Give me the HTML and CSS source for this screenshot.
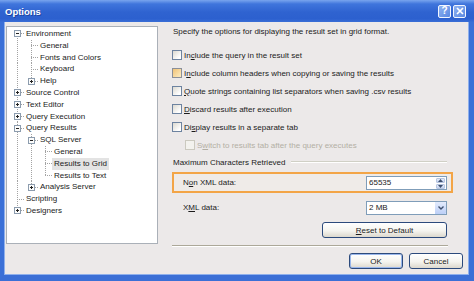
FILE: index.html
```html
<!DOCTYPE html>
<html lang="en">
<head>
    <meta charset="UTF-8">
    <title>Options</title>
    <link rel="stylesheet" href="styles.css">
</head>
<body>

<div class="window">
    <!-- Title bar -->
    <div class="titlebar">
        <span class="title">Options</span>
        <div class="caption-buttons">
            <span class="cap-btn">?</span>
            <span class="cap-btn">
                <svg width="8" height="8" viewBox="0 0 8 8"><path d="M1 1L7 7M7 1L1 7" stroke="#fff" stroke-width="1.7"/></svg>
            </span>
        </div>
    </div>

    <div class="client">
        <!-- Left: options tree -->
        <div class="tree">
            <div class="node"><span class="g f"><i class="box minus"></i></span><span class="label">Environment</span></div>
            <div class="node"><span class="g v"></span><span class="g t"></span><span class="label">General</span></div>
            <div class="node"><span class="g v"></span><span class="g t"></span><span class="label">Fonts and Colors</span></div>
            <div class="node"><span class="g v"></span><span class="g t"></span><span class="label">Keyboard</span></div>
            <div class="node"><span class="g v"></span><span class="g l"><i class="box plus"></i></span><span class="label">Help</span></div>
            <div class="node"><span class="g t"><i class="box plus"></i></span><span class="label">Source Control</span></div>
            <div class="node"><span class="g t"><i class="box plus"></i></span><span class="label">Text Editor</span></div>
            <div class="node"><span class="g t"><i class="box plus"></i></span><span class="label">Query Execution</span></div>
            <div class="node"><span class="g t"><i class="box minus"></i></span><span class="label">Query Results</span></div>
            <div class="node"><span class="g v"></span><span class="g t"><i class="box minus"></i></span><span class="label">SQL Server</span></div>
            <div class="node"><span class="g v"></span><span class="g v"></span><span class="g t"></span><span class="label">General</span></div>
            <div class="node"><span class="g v"></span><span class="g v"></span><span class="g t"></span><span class="label selected">Results to Grid</span></div>
            <div class="node"><span class="g v"></span><span class="g v"></span><span class="g l"></span><span class="label">Results to Text</span></div>
            <div class="node"><span class="g v"></span><span class="g l"><i class="box plus"></i></span><span class="label">Analysis Server</span></div>
            <div class="node"><span class="g t"></span><span class="label">Scripting</span></div>
            <div class="node"><span class="g l"><i class="box plus"></i></span><span class="label">Designers</span></div>
        </div>

        <!-- Right: options page -->
        <div class="page">
            <p class="intro">Specify the options for displaying the result set in grid format.</p>

            <div class="check first"><span class="cb"></span>In<u>c</u>lude the query in the result set</div>
            <div class="check"><span class="cb hot"></span>I<u>n</u>clude column headers when copying or saving the results</div>
            <div class="check"><span class="cb"></span><u>Q</u>uote strings containing list separators when saving .csv results</div>
            <div class="check"><span class="cb"></span><u>D</u>iscard results after execution</div>
            <div class="check"><span class="cb"></span>Di<u>s</u>play results in a separate tab</div>
            <div class="check indent disabled"><span class="cb"></span>S<u>w</u>itch to results tab after the query executes</div>

            <div class="group-title"><span>Maximum Characters Retrieved</span><span class="rule"></span></div>

            <div class="field hl">
                <span class="field-label">N<u>o</u>n XML data:</span>
                <span class="spin">
                    <span class="val">65535</span>
                    <span class="spin-btns">
                        <span><svg width="5" height="3" viewBox="0 0 5 3"><path d="M0 3L2.5 0L5 3Z" fill="#3d4f6e"/></svg></span>
                        <span><svg width="5" height="3" viewBox="0 0 5 3"><path d="M0 0L2.5 3L5 0Z" fill="#3d4f6e"/></svg></span>
                    </span>
                </span>
            </div>

            <div class="field">
                <span class="field-label">X<u>M</u>L data:</span>
                <span class="combo">
                    <span class="val">2 MB</span>
                    <span class="drop"><svg width="6" height="4" viewBox="0 0 6 4"><path d="M0.5 0.5L3 3L5.5 0.5" fill="none" stroke="#3d4f6e" stroke-width="1.4"/></svg></span>
                </span>
            </div>

            <div class="reset-row">
                <button class="btn reset"><u>R</u>eset to Default</button>
            </div>

            <div class="separator"></div>

            <div class="footer">
                <button class="btn default">OK</button>
                <button class="btn">Cancel</button>
            </div>
        </div>
    </div>
</div>

</body>
</html>
```

FILE: styles.css
```css
/* Global */
body {
    margin: 0;
    font-family: "Liberation Sans", Arial, sans-serif;
    font-size: 8px;
    color: #1b1b1b;
    background: #fff;
}
u {
    text-decoration-thickness: 1px;
    text-underline-offset: 1px;
}
.window {
    width: 474px;
    height: 281px;
    display: flex;
    flex-direction: column;
    overflow: hidden;
}
/* Title bar */
.titlebar {
    height: 22px;
    flex: none;
    display: flex;
    align-items: center;
    padding: 0 8px 0 5px;
    background: linear-gradient(#79a5ee, #3f75dc 18%, #2f63d0 55%, #2c60cf 85%, #3a6ed6);
    color: #fff;
}
.title {
    flex: 1;
    font-weight: bold;
    font-size: 9.5px;
    text-shadow: 1px 1px 0 rgba(10, 30, 100, 0.45);
}
.caption-buttons {
    display: flex;
    gap: 2px;
}
.cap-btn {
    width: 13px;
    height: 13px;
    box-sizing: border-box;
    border: 1px solid #f2f6ff;
    border-radius: 2px;
    background: linear-gradient(135deg, #8fb3f1, #5a88e2);
    display: flex;
    align-items: center;
    justify-content: center;
    font-weight: bold;
    font-size: 10px;
    line-height: 1;
}
/* Client area */
.client {
    flex: 1;
    display: flex;
    align-items: flex-start;
    padding: 4px 6px 0 2px;
    background: #ece9e9;
    border-left: 4px solid #3b70d7;
    border-right: 5px solid #3b70d7;
    border-bottom: 6px solid #3b6fd6;
    box-shadow: inset 1px 0 0 #8fb0ec, inset -1px 0 0 #8fb0ec, inset 0 -1px 0 #8fb0ec;
}
/* Tree */
.tree {
    width: 152px;
    height: 218px;
    box-sizing: border-box;
    flex: none;
    margin-right: 14px;
    padding: 1px 0 0 3px;
    background: #fff;
    border: 1px solid #aab0b8;
}
.node {
    height: 11.8px;
    display: flex;
    align-items: center;
}
.g {
    width: 14px;
    height: 100%;
    flex: none;
    display: flex;
    align-items: center;
    justify-content: center;
    background-repeat: no-repeat;
}
.g.v {
    background-image: repeating-linear-gradient(to bottom, #a3a3a3 0 1px, transparent 1px 2px);
    background-size: 1px 100%;
    background-position: 7px 0;
}
.g.t {
    background-image: repeating-linear-gradient(to bottom, #a3a3a3 0 1px, transparent 1px 2px),
                      repeating-linear-gradient(to right, #a3a3a3 0 1px, transparent 1px 2px);
    background-size: 1px 100%, 7px 1px;
    background-position: 7px 0, 7px 50%;
}
.g.l {
    background-image: repeating-linear-gradient(to bottom, #a3a3a3 0 1px, transparent 1px 2px),
                      repeating-linear-gradient(to right, #a3a3a3 0 1px, transparent 1px 2px);
    background-size: 1px 50%, 7px 1px;
    background-position: 7px 0, 7px 50%;
}
.g.f {
    background-image: repeating-linear-gradient(to bottom, #a3a3a3 0 1px, transparent 1px 2px),
                      repeating-linear-gradient(to right, #a3a3a3 0 1px, transparent 1px 2px);
    background-size: 1px 50%, 7px 1px;
    background-position: 7px 100%, 7px 50%;
}
.box {
    width: 7px;
    height: 7px;
    box-sizing: border-box;
    border: 1px solid #8c9cae;
    margin-left: 1px;
}
.box.minus {
    background: linear-gradient(#222, #222) center / 3px 1px no-repeat, #fcfcfb;
}
.box.plus {
    background: linear-gradient(#222, #222) center / 3px 1px no-repeat,
                linear-gradient(#222, #222) center / 1px 3px no-repeat, #fcfcfb;
}
.label {
    padding: 0 2px;
    line-height: 11.8px;
    white-space: nowrap;
}
.label.selected {
    background: #e3e3e3;
}
/* Options page */
.page {
    flex: 1;
    display: flex;
    flex-direction: column;
}
.intro {
    margin: 0;
    height: 12px;
    line-height: 12px;
    padding-left: 1px;
}
.check {
    height: 18px;
    display: flex;
    align-items: center;
    white-space: nowrap;
}
.check.first {
    margin-top: 8px;
}
.check.indent {
    padding-left: 13px;
}
.check.disabled {
    color: #b3afa4;
}
.cb {
    width: 10px;
    height: 10px;
    box-sizing: border-box;
    flex: none;
    margin-right: 2px;
    border: 1px solid #6d83a0;
    background: linear-gradient(135deg, #dcd9d0, #fff 80%);
}
.cb.hot {
    border-color: #8b8f98;
    background: linear-gradient(135deg, #f0c276, #fbe5b4 80%);
}
.check.disabled .cb {
    border-color: #cbc9bf;
    background: #f3f2ee;
}
.group-title {
    height: 12px;
    margin: 2px 16px 0 1px;
    display: flex;
    align-items: center;
    white-space: nowrap;
}
.rule {
    flex: 1;
    margin-left: 6px;
    border-top: 1px solid #d0d0c6;
    border-bottom: 1px solid #fff;
}
.field {
    height: 21px;
    box-sizing: border-box;
    margin: 4px 10px 0 0;
    padding: 0 4px 0 9px;
    border: 2px solid transparent;
    display: flex;
    align-items: center;
}
.field.hl {
    border-color: #f3a547;
    background: #efebe8;
}
.field-label {
    flex: 1;
}
.spin, .combo {
    width: 81px;
    height: 14px;
    box-sizing: border-box;
    border: 1px solid #7f9db9;
    background: #fff;
    display: flex;
    align-items: center;
    padding-left: 2px;
}
.val {
    flex: 1;
}
.spin-btns {
    width: 9px;
    height: 10px;
    margin-right: 1px;
    display: flex;
    flex-direction: column;
    gap: 1px;
}
.spin-btns span {
    flex: 1;
    display: flex;
    align-items: center;
    justify-content: center;
    border-radius: 1px;
    background: linear-gradient(#e6edfb, #c3d3f1);
    border: 1px solid #b8c6e0;
    box-sizing: border-box;
}
.drop {
    width: 11px;
    height: 12px;
    display: flex;
    align-items: center;
    justify-content: center;
    border-radius: 1px;
    background: linear-gradient(#e3ebfd, #bccff7);
    border-left: 1px solid #fff;
}
/* Buttons */
.btn {
    box-sizing: border-box;
    height: 16px;
    padding: 0;
    font: inherit;
    color: #1b1b1b;
    border: 1px solid #2c4a7c;
    border-radius: 3px;
    background: linear-gradient(#ffffff, #f5f4ef 55%, #dcd8cd);
}
.btn.default {
    box-shadow: inset 0 0 0 1px #9ab7ec;
}
.reset-row {
    margin: 4px 16px 0 0;
    display: flex;
    justify-content: flex-end;
}
.reset {
    width: 125px;
}
.separator {
    margin: 7px 15px 0 0;
    border-top: 1px solid #aca899;
    border-bottom: 1px solid #fff;
}
.footer {
    margin-top: 6px;
    display: flex;
    justify-content: flex-end;
    gap: 6px;
}
.footer .btn {
    width: 54px;
}
```
